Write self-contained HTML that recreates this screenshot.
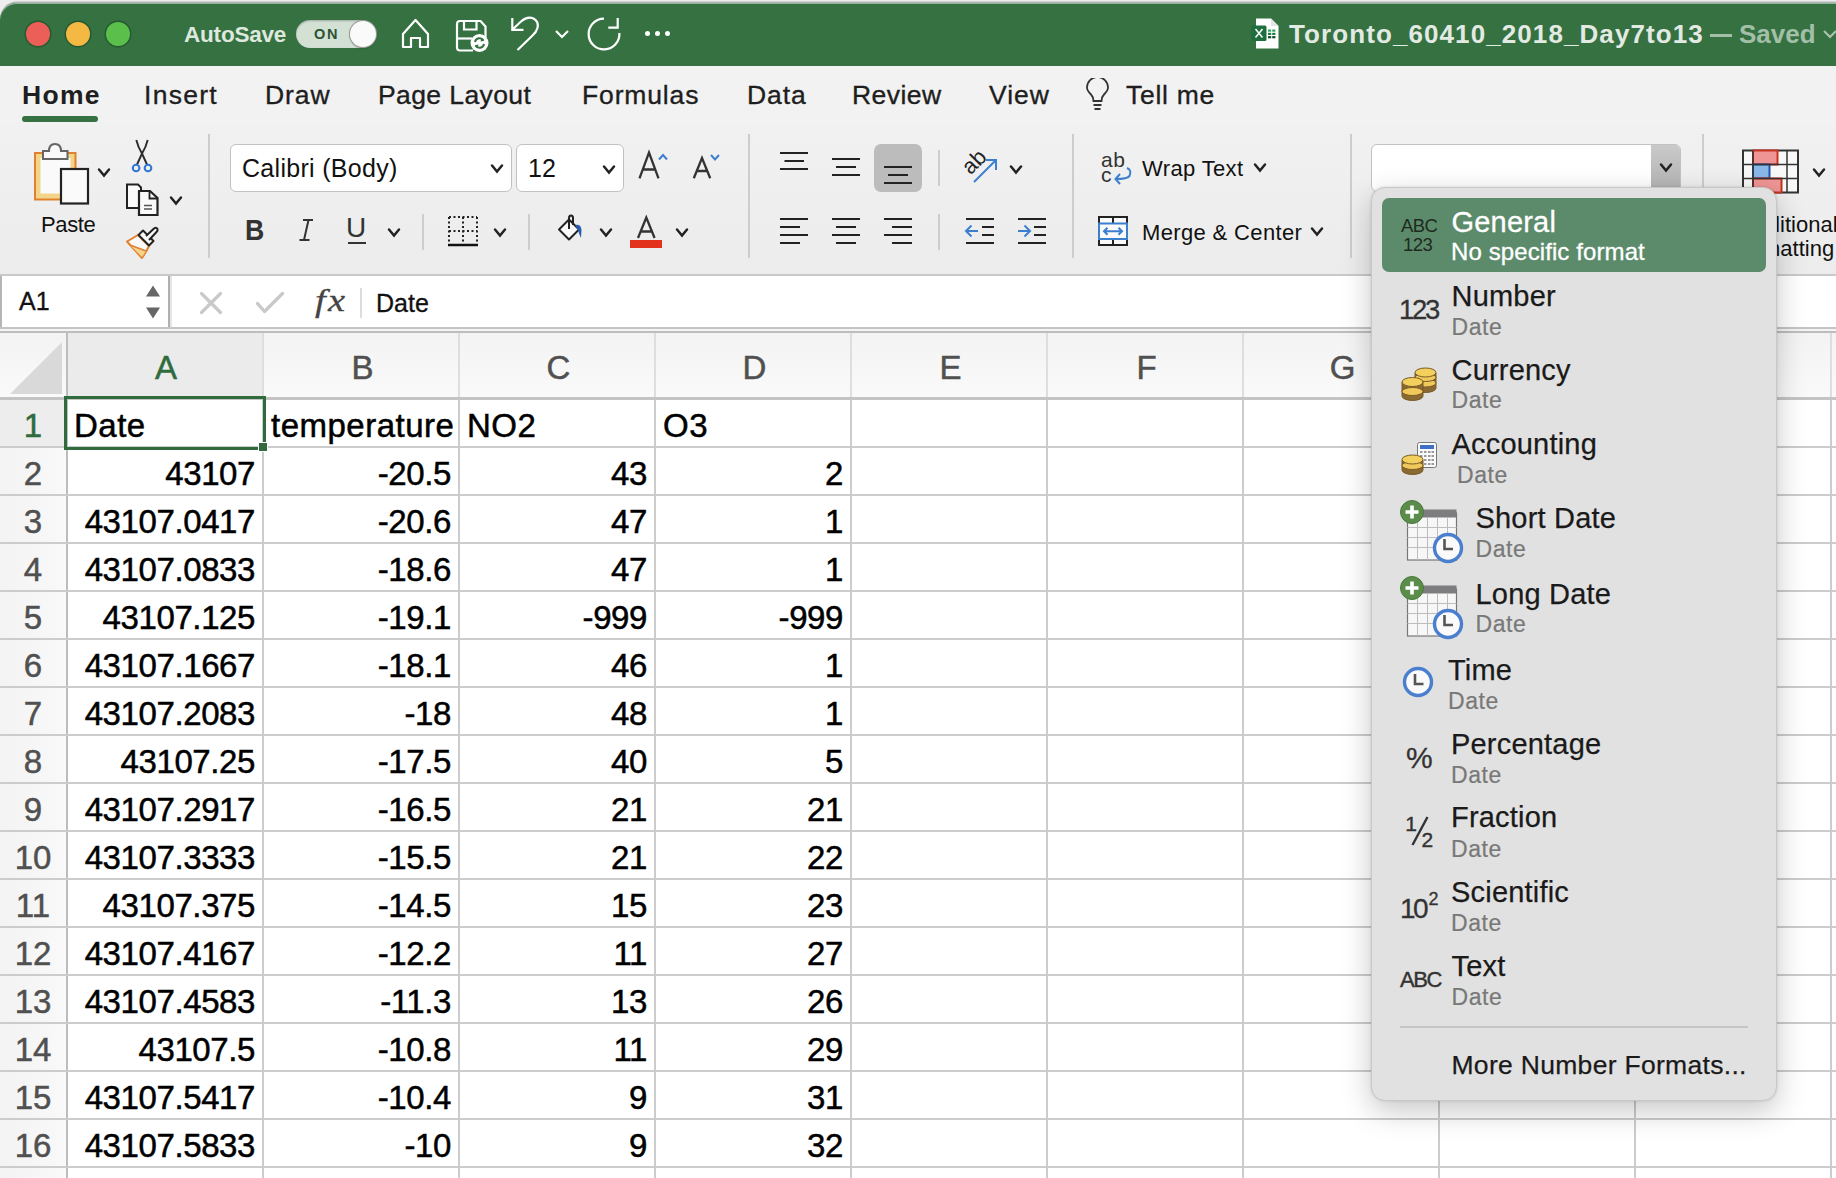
<!DOCTYPE html>
<html><head><meta charset="utf-8">
<style>
*{margin:0;padding:0;box-sizing:border-box}
html,body{width:1836px;height:1178px;overflow:hidden;background:#fff;font-family:"Liberation Sans",sans-serif;position:relative}
.a{position:absolute}
.colhdr{position:absolute;background:linear-gradient(#f3f3f3,#fafafa)}
.rowhdr{position:absolute;background:linear-gradient(90deg,#f3f3f3,#f9f9f9)}
.hl{position:absolute;text-align:center;font-size:33px;line-height:40px;-webkit-text-stroke:0.5px currentColor}
.rn{position:absolute;left:0;width:66px;text-align:center;font-size:33px;line-height:48px;height:48px;padding-top:2px;-webkit-text-stroke:0.5px currentColor}
.cl{position:absolute;font-size:33px;line-height:48px;color:#000;white-space:nowrap;padding-top:2px;letter-spacing:0.5px;-webkit-text-stroke:0.5px #000}
.cr{position:absolute;font-size:33px;line-height:48px;color:#000;text-align:right;white-space:nowrap;letter-spacing:-0.4px;padding-top:2px;-webkit-text-stroke:0.5px #000}
.tab{position:absolute;top:78.3px;font-size:26.5px;line-height:34px;color:#1e1e1e;white-space:nowrap;letter-spacing:0.35px;-webkit-text-stroke:0.35px #1e1e1e}
.b{font-weight:bold;letter-spacing:0.2px;-webkit-text-stroke:0}
.sep{position:absolute;width:2px;background:#cdcdcd}
.chev{position:absolute;width:16px;height:12px;overflow:visible}
.chev path{fill:none;stroke:#222;stroke-width:2.5;stroke-linecap:round}
.box{position:absolute;background:#fff;border:1px solid #c2c2c2;border-radius:6px}
.mt{position:absolute;font-size:29px;line-height:32px;color:#1a1a1a;white-space:nowrap;letter-spacing:0.2px;-webkit-text-stroke:0.25px #1a1a1a}
.ms{position:absolute;font-size:23px;line-height:26px;color:#787878;white-space:nowrap;letter-spacing:0.6px;-webkit-text-stroke:0.2px #787878}

</style></head><body>
<div class="colhdr" style="left:0;top:333px;width:1836px;height:66px"></div>
<div style="position:absolute;left:67px;top:333px;width:196px;height:66px;background:#ebebeb"></div>
<div class="rowhdr" style="left:0;top:400px;width:66px;height:778px"></div>
<div style="position:absolute;left:0;top:400px;width:66px;height:47px;background:#ededed"></div>
<svg style="position:absolute;left:0;top:333px" width="66" height="66"><polygon points="10,61 62,9 62,61" fill="#d9d9d9"/></svg>
<div style="position:absolute;left:66px;top:333px;width:2px;height:845px;background:#bdbdbd"></div>
<div style="position:absolute;left:262px;top:333px;width:2px;height:66px;background:#dedede"></div>
<div style="position:absolute;left:262px;top:399px;width:2px;height:779px;background:#cccccc"></div>
<div style="position:absolute;left:458px;top:333px;width:2px;height:66px;background:#dedede"></div>
<div style="position:absolute;left:458px;top:399px;width:2px;height:779px;background:#cccccc"></div>
<div style="position:absolute;left:654px;top:333px;width:2px;height:66px;background:#dedede"></div>
<div style="position:absolute;left:654px;top:399px;width:2px;height:779px;background:#cccccc"></div>
<div style="position:absolute;left:850px;top:333px;width:2px;height:66px;background:#dedede"></div>
<div style="position:absolute;left:850px;top:399px;width:2px;height:779px;background:#cccccc"></div>
<div style="position:absolute;left:1046px;top:333px;width:2px;height:66px;background:#dedede"></div>
<div style="position:absolute;left:1046px;top:399px;width:2px;height:779px;background:#cccccc"></div>
<div style="position:absolute;left:1242px;top:333px;width:2px;height:66px;background:#dedede"></div>
<div style="position:absolute;left:1242px;top:399px;width:2px;height:779px;background:#cccccc"></div>
<div style="position:absolute;left:1438px;top:333px;width:2px;height:66px;background:#dedede"></div>
<div style="position:absolute;left:1438px;top:399px;width:2px;height:779px;background:#cccccc"></div>
<div style="position:absolute;left:1634px;top:333px;width:2px;height:66px;background:#dedede"></div>
<div style="position:absolute;left:1634px;top:399px;width:2px;height:779px;background:#cccccc"></div>
<div style="position:absolute;left:1830px;top:333px;width:2px;height:66px;background:#dedede"></div>
<div style="position:absolute;left:1830px;top:399px;width:2px;height:779px;background:#cccccc"></div>
<div style="position:absolute;left:0;top:397px;width:1836px;height:2.5px;background:#c4c4c4"></div>
<div style="position:absolute;left:0;top:446px;width:1836px;height:2px;background:#cccccc"></div>
<div style="position:absolute;left:0;top:494px;width:1836px;height:2px;background:#cccccc"></div>
<div style="position:absolute;left:0;top:542px;width:1836px;height:2px;background:#cccccc"></div>
<div style="position:absolute;left:0;top:590px;width:1836px;height:2px;background:#cccccc"></div>
<div style="position:absolute;left:0;top:638px;width:1836px;height:2px;background:#cccccc"></div>
<div style="position:absolute;left:0;top:686px;width:1836px;height:2px;background:#cccccc"></div>
<div style="position:absolute;left:0;top:734px;width:1836px;height:2px;background:#cccccc"></div>
<div style="position:absolute;left:0;top:782px;width:1836px;height:2px;background:#cccccc"></div>
<div style="position:absolute;left:0;top:830px;width:1836px;height:2px;background:#cccccc"></div>
<div style="position:absolute;left:0;top:878px;width:1836px;height:2px;background:#cccccc"></div>
<div style="position:absolute;left:0;top:926px;width:1836px;height:2px;background:#cccccc"></div>
<div style="position:absolute;left:0;top:974px;width:1836px;height:2px;background:#cccccc"></div>
<div style="position:absolute;left:0;top:1022px;width:1836px;height:2px;background:#cccccc"></div>
<div style="position:absolute;left:0;top:1070px;width:1836px;height:2px;background:#cccccc"></div>
<div style="position:absolute;left:0;top:1118px;width:1836px;height:2px;background:#cccccc"></div>
<div style="position:absolute;left:0;top:1166px;width:1836px;height:2px;background:#cccccc"></div>
<div class="hl" style="left:67.5px;width:197px;top:348px;color:#2f6b3c">A</div>
<div class="hl" style="left:264.5px;width:196px;top:348px;color:#505050">B</div>
<div class="hl" style="left:460.5px;width:196px;top:348px;color:#505050">C</div>
<div class="hl" style="left:656.5px;width:196px;top:348px;color:#505050">D</div>
<div class="hl" style="left:852.5px;width:196px;top:348px;color:#505050">E</div>
<div class="hl" style="left:1048.5px;width:196px;top:348px;color:#505050">F</div>
<div class="hl" style="left:1244.5px;width:196px;top:348px;color:#505050">G</div>
<div class="hl" style="left:1440.5px;width:196px;top:348px;color:#505050">H</div>
<div class="hl" style="left:1636.5px;width:196px;top:348px;color:#505050">I</div>
<div class="rn" style="top:400px;color:#2f6b3c">1</div>
<div class="rn" style="top:448px;color:#505050">2</div>
<div class="rn" style="top:496px;color:#505050">3</div>
<div class="rn" style="top:544px;color:#505050">4</div>
<div class="rn" style="top:592px;color:#505050">5</div>
<div class="rn" style="top:640px;color:#505050">6</div>
<div class="rn" style="top:688px;color:#505050">7</div>
<div class="rn" style="top:736px;color:#505050">8</div>
<div class="rn" style="top:784px;color:#505050">9</div>
<div class="rn" style="top:832px;color:#505050">10</div>
<div class="rn" style="top:880px;color:#505050">11</div>
<div class="rn" style="top:928px;color:#505050">12</div>
<div class="rn" style="top:976px;color:#505050">13</div>
<div class="rn" style="top:1024px;color:#505050">14</div>
<div class="rn" style="top:1072px;color:#505050">15</div>
<div class="rn" style="top:1120px;color:#505050">16</div>
<div class="cl" style="left:74px;top:400px">Date</div>
<div class="cl" style="left:271px;top:400px">temperature</div>
<div class="cl" style="left:467px;top:400px">NO2</div>
<div class="cl" style="left:663px;top:400px">O3</div>
<div class="cr" style="left:66px;width:189px;top:448px">43107</div>
<div class="cr" style="left:263px;width:188px;top:448px">-20.5</div>
<div class="cr" style="left:459px;width:188px;top:448px">43</div>
<div class="cr" style="left:655px;width:188px;top:448px">2</div>
<div class="cr" style="left:66px;width:189px;top:496px">43107.0417</div>
<div class="cr" style="left:263px;width:188px;top:496px">-20.6</div>
<div class="cr" style="left:459px;width:188px;top:496px">47</div>
<div class="cr" style="left:655px;width:188px;top:496px">1</div>
<div class="cr" style="left:66px;width:189px;top:544px">43107.0833</div>
<div class="cr" style="left:263px;width:188px;top:544px">-18.6</div>
<div class="cr" style="left:459px;width:188px;top:544px">47</div>
<div class="cr" style="left:655px;width:188px;top:544px">1</div>
<div class="cr" style="left:66px;width:189px;top:592px">43107.125</div>
<div class="cr" style="left:263px;width:188px;top:592px">-19.1</div>
<div class="cr" style="left:459px;width:188px;top:592px">-999</div>
<div class="cr" style="left:655px;width:188px;top:592px">-999</div>
<div class="cr" style="left:66px;width:189px;top:640px">43107.1667</div>
<div class="cr" style="left:263px;width:188px;top:640px">-18.1</div>
<div class="cr" style="left:459px;width:188px;top:640px">46</div>
<div class="cr" style="left:655px;width:188px;top:640px">1</div>
<div class="cr" style="left:66px;width:189px;top:688px">43107.2083</div>
<div class="cr" style="left:263px;width:188px;top:688px">-18</div>
<div class="cr" style="left:459px;width:188px;top:688px">48</div>
<div class="cr" style="left:655px;width:188px;top:688px">1</div>
<div class="cr" style="left:66px;width:189px;top:736px">43107.25</div>
<div class="cr" style="left:263px;width:188px;top:736px">-17.5</div>
<div class="cr" style="left:459px;width:188px;top:736px">40</div>
<div class="cr" style="left:655px;width:188px;top:736px">5</div>
<div class="cr" style="left:66px;width:189px;top:784px">43107.2917</div>
<div class="cr" style="left:263px;width:188px;top:784px">-16.5</div>
<div class="cr" style="left:459px;width:188px;top:784px">21</div>
<div class="cr" style="left:655px;width:188px;top:784px">21</div>
<div class="cr" style="left:66px;width:189px;top:832px">43107.3333</div>
<div class="cr" style="left:263px;width:188px;top:832px">-15.5</div>
<div class="cr" style="left:459px;width:188px;top:832px">21</div>
<div class="cr" style="left:655px;width:188px;top:832px">22</div>
<div class="cr" style="left:66px;width:189px;top:880px">43107.375</div>
<div class="cr" style="left:263px;width:188px;top:880px">-14.5</div>
<div class="cr" style="left:459px;width:188px;top:880px">15</div>
<div class="cr" style="left:655px;width:188px;top:880px">23</div>
<div class="cr" style="left:66px;width:189px;top:928px">43107.4167</div>
<div class="cr" style="left:263px;width:188px;top:928px">-12.2</div>
<div class="cr" style="left:459px;width:188px;top:928px">11</div>
<div class="cr" style="left:655px;width:188px;top:928px">27</div>
<div class="cr" style="left:66px;width:189px;top:976px">43107.4583</div>
<div class="cr" style="left:263px;width:188px;top:976px">-11.3</div>
<div class="cr" style="left:459px;width:188px;top:976px">13</div>
<div class="cr" style="left:655px;width:188px;top:976px">26</div>
<div class="cr" style="left:66px;width:189px;top:1024px">43107.5</div>
<div class="cr" style="left:263px;width:188px;top:1024px">-10.8</div>
<div class="cr" style="left:459px;width:188px;top:1024px">11</div>
<div class="cr" style="left:655px;width:188px;top:1024px">29</div>
<div class="cr" style="left:66px;width:189px;top:1072px">43107.5417</div>
<div class="cr" style="left:263px;width:188px;top:1072px">-10.4</div>
<div class="cr" style="left:459px;width:188px;top:1072px">9</div>
<div class="cr" style="left:655px;width:188px;top:1072px">31</div>
<div class="cr" style="left:66px;width:189px;top:1120px">43107.5833</div>
<div class="cr" style="left:263px;width:188px;top:1120px">-10</div>
<div class="cr" style="left:459px;width:188px;top:1120px">9</div>
<div class="cr" style="left:655px;width:188px;top:1120px">32</div>
<div style="position:absolute;left:64px;top:396px;width:196px;height:48px;border:3.5px solid #2f6b3c;box-sizing:content-box;border-right-width:3.5px"></div>
<div style="position:absolute;left:258px;top:442px;width:10px;height:10px;background:#2f6b3c;border:1px solid #fff"></div>
<div class="a" style="left:0;top:0;width:1836px;height:40px;background:#ededed"></div>
<div class="a" style="left:0;top:3px;width:1836px;height:63px;background:#357141;border-top-left-radius:17px;box-shadow:0 -1.5px 0.5px #b5b5b5,inset 0 1px 0 #8fb598"></div>
<!-- traffic lights -->
<div class="a" style="left:26px;top:22px;width:24px;height:24px;border-radius:50%;background:#ec5f58;box-shadow:0 0 0 1.5px #265a31"></div>
<div class="a" style="left:66px;top:22px;width:24px;height:24px;border-radius:50%;background:#f4b943;box-shadow:0 0 0 1.5px #265a31"></div>
<div class="a" style="left:106px;top:22px;width:24px;height:24px;border-radius:50%;background:#5ac04b;box-shadow:0 0 0 1.5px #265a31"></div>
<div class="a" style="left:184px;top:19.5px;font-size:22.5px;line-height:30px;font-weight:bold;color:#dfe8df;letter-spacing:-0.2px">AutoSave</div>
<div class="a" style="left:296px;top:20px;width:79px;height:28px;border-radius:14px;background:#d3e0d4;box-shadow:inset 0 1px 2px rgba(0,0,0,.25)"></div>
<div class="a" style="left:314px;top:20px;font-size:14.5px;line-height:28px;font-weight:bold;color:#2c5234;letter-spacing:1.8px">ON</div>
<div class="a" style="left:350px;top:21px;width:26px;height:26px;border-radius:50%;background:#fafafa;box-shadow:0 0 0 1px #9a9a9a,0 1px 2px rgba(0,0,0,.4)"></div>
<svg class="a" style="left:396px;top:14px" width="40" height="40" viewBox="0 0 40 40"><path d="M7 20 L19.5 6 L32 20 L32 33 L24 33 L24 24 L15 24 L15 33 L7 33 Z" fill="none" stroke="#fff" stroke-width="2.2" stroke-linejoin="round"/></svg>
<svg class="a" style="left:452px;top:16px" width="40" height="40" viewBox="0 0 40 40"><path d="M21 34.5 L8 34.5 Q5 34.5 5 31.5 L5 8 Q5 5 8 5 L28.5 5 L33.5 10.5 L33.5 22" fill="none" stroke="#fff" stroke-width="2.2" stroke-linejoin="round"/><path d="M12 5 L12 13.5 L24.5 13.5 L24.5 5" fill="none" stroke="#fff" stroke-width="2.2"/><path d="M5 22.5 L20 22.5" fill="none" stroke="#fff" stroke-width="2.2"/><circle cx="27.5" cy="27" r="9" fill="#fff"/><path d="M23 26 A4.6 4.6 0 0 1 31.5 24.5 M32 28 A4.6 4.6 0 0 1 23.5 29.5" fill="none" stroke="#357141" stroke-width="2"/><path d="M29.5 22 L32.3 24.8 L28.5 25.5Z M25.5 32 L22.7 29.2 L26.5 28.5Z" fill="#357141"/></svg>
<svg class="a" style="left:508px;top:14px" width="36" height="40" viewBox="0 0 36 40"><path d="M4.3 4 L4.3 15.8 L15.5 15.8" fill="none" stroke="#fff" stroke-width="2.2"/><path d="M4.8 15.3 L13 7.5 Q19.5 1.8 25.5 4.5 Q31 7.5 29.5 14 Q28.5 18 24 22 L9.5 36" fill="none" stroke="#fff" stroke-width="2.2" stroke-linejoin="round"/></svg>
<svg class="a" style="left:552px;top:26px" width="20" height="16" viewBox="0 0 20 16"><path d="M4 5 L10 11 L16 5" fill="none" stroke="#fff" stroke-width="2.2"/></svg>
<svg class="a" style="left:584px;top:14px" width="40" height="40" viewBox="0 0 40 40"><path d="M20 4.6 A15.4 15.4 0 1 0 35.4 19" fill="none" stroke="#fff" stroke-width="2.2"/><path d="M33.7 4 L33.7 13.6 L24.3 13.6" fill="none" stroke="#fff" stroke-width="2.2"/></svg>
<div class="a" style="left:645px;top:31px;width:5px;height:5px;border-radius:50%;background:#fff"></div>
<div class="a" style="left:655px;top:31px;width:5px;height:5px;border-radius:50%;background:#fff"></div>
<div class="a" style="left:665px;top:31px;width:5px;height:5px;border-radius:50%;background:#fff"></div>
<!-- file icon -->
<svg class="a" style="left:1250px;top:17px" width="32" height="34" viewBox="0 0 32 34"><path d="M6 1.5 L21 1.5 L28.5 9 L28.5 31.5 L6 31.5 Z" fill="#fff"/><path d="M21 1.5 L21 9 L28.5 9 Z" fill="#e4e4e4"/><rect x="1.5" y="8.5" width="15" height="15.5" rx="1.5" fill="#1f6e3d"/><path d="M5.5 12 L12.5 20.5 M12.5 12 L5.5 20.5" stroke="#fff" stroke-width="1.5"/><g><rect x="18" y="12.5" width="3.2" height="2.2" fill="#33a363"/><rect x="22.2" y="12.5" width="3.2" height="2.2" fill="#33a363"/><rect x="18" y="15.8" width="3.2" height="2.2" fill="#1f7a45"/><rect x="22.2" y="15.8" width="3.2" height="2.2" fill="#1f7a45"/><rect x="18" y="19.1" width="3.2" height="2.2" fill="#0e4a2a"/><rect x="22.2" y="19.1" width="3.2" height="2.2" fill="#0e4a2a"/></g></svg>
<div class="a" style="left:1289px;top:17px;font-size:26px;line-height:34px;font-weight:bold;color:#e3eae3;white-space:nowrap;letter-spacing:1.09px">Toronto_60410_2018_Day7to13</div>
<div class="a" style="left:1710px;top:34px;width:22px;height:3px;background:#a3bfa8"></div>
<div class="a" style="left:1739px;top:17px;font-size:26px;line-height:34px;font-weight:bold;color:#a3bfa8;white-space:nowrap">Saved</div>
<svg class="a" style="left:1821px;top:26px" width="18" height="16" viewBox="0 0 18 16"><path d="M3 5 L9 11 L15 5" fill="none" stroke="#a9c2ad" stroke-width="2.2"/></svg>
<!-- tabs -->
<div class="a" style="left:0;top:66px;width:1836px;height:60px;background:#f2f2f2"></div>
<div class="tab b" style="left:22px;letter-spacing:1.3px">Home</div>
<div class="a" style="left:22px;top:116px;width:76px;height:6px;border-radius:3px;background:#357141"></div>
<div class="tab" style="left:144px;letter-spacing:1.27px">Insert</div>
<div class="tab" style="left:265px;letter-spacing:0.9px">Draw</div>
<div class="tab" style="left:378px;letter-spacing:0.4px">Page Layout</div>
<div class="tab" style="left:582px;letter-spacing:0.85px">Formulas</div>
<div class="tab" style="left:747px;letter-spacing:0.9px">Data</div>
<div class="tab" style="left:852px;letter-spacing:0.45px">Review</div>
<div class="tab" style="left:989px;letter-spacing:0.95px">View</div>
<svg class="a" style="left:1082px;top:78px" width="32" height="34" viewBox="0 0 32 34"><path d="M11.5 23 Q11.5 19 9 16.5 Q5 12.5 5 9.5 A10.5 10.5 0 0 1 26 9.5 Q26 12.5 22 16.5 Q19.5 19 19.5 23 Z" fill="none" stroke="#333" stroke-width="1.8"/><path d="M11.5 27 L19.5 27 M12.5 31 L18.5 31" stroke="#333" stroke-width="1.8"/></svg>
<div class="tab" style="left:1126px;letter-spacing:0.7px">Tell me</div>

<div class="a" style="left:0;top:126px;width:1836px;height:149px;background:linear-gradient(#f1f1f1,#ececec)"></div>
<div class="a" style="left:0;top:274px;width:1836px;height:2px;background:#c9c9c9"></div>
<!-- separators -->
<div class="sep" style="left:208px;top:134px;height:124px"></div>
<div class="sep" style="left:748px;top:134px;height:124px"></div>
<div class="sep" style="left:1072px;top:134px;height:124px"></div>
<div class="sep" style="left:1350px;top:134px;height:124px"></div>
<div class="sep" style="left:1702px;top:134px;height:124px"></div>
<div class="sep" style="left:422px;top:214px;height:36px"></div>
<div class="sep" style="left:528px;top:214px;height:36px"></div>
<div class="sep" style="left:938px;top:150px;height:36px"></div>
<div class="sep" style="left:938px;top:214px;height:36px"></div>
<!-- paste -->
<svg class="a" style="left:30px;top:140px" width="64" height="68" viewBox="0 0 64 68">
<rect x="5" y="13" width="40.5" height="46.5" fill="#f3d58a" stroke="#e0812f" stroke-width="2"/>
<rect x="10.5" y="18" width="30" height="35.5" fill="#fafafa"/>
<path d="M13 19 L13 11 L19 11 Q19 4 25 4 Q31 4 31 11 L37.5 11 L37.5 19 Z" fill="#fafafa" stroke="#666" stroke-width="2"/>
<rect x="31" y="29" width="27" height="34.5" fill="#fafafa" stroke="#222" stroke-width="2.2"/>
</svg>
<svg class="chev" style="left:96px;top:166px"><path d="M3 3.5 L8 9.5 L13 3.5"/></svg>
<div class="a" style="left:41px;top:211.8px;font-size:22px;line-height:26px;color:#111;letter-spacing:-0.35px">Paste</div>
<!-- scissors -->
<svg class="a" style="left:126px;top:138px" width="32" height="36" viewBox="0 0 32 36">
<path d="M10.3 2 Q12 9 16.2 16 L21 26.5 M21.7 2 Q20 9 15.8 16 L11 26.5" stroke="#2a2a2a" stroke-width="1.9" fill="none"/>
<circle cx="10.1" cy="30" r="3.3" fill="none" stroke="#3277d0" stroke-width="2.1"/>
<circle cx="22" cy="30" r="3.3" fill="none" stroke="#3277d0" stroke-width="2.1"/>
</svg>
<!-- copy -->
<svg class="a" style="left:122px;top:180px" width="40" height="40" viewBox="0 0 40 40">
<path d="M5 28 L5 4.5 L16 4.5 L19 7.5 L19 28 Z" fill="#fafafa" stroke="#222" stroke-width="2"/>
<path d="M17 35 L17 11 L28 11 L35.5 18 L35.5 35 Z" fill="#fafafa" stroke="#222" stroke-width="2.2"/>
<path d="M27.5 11 L27.5 18.5 L35.5 18.5" fill="none" stroke="#222" stroke-width="1.8"/>
<path d="M22 25.5 L30 25.5 M22 29 L30 29" stroke="#555" stroke-width="1.6"/>
</svg>
<svg class="chev" style="left:168px;top:194px"><path d="M3 3.5 L8 9.5 L13 3.5"/></svg>
<!-- format painter -->
<svg class="a" style="left:122px;top:224px" width="40" height="38" viewBox="0 0 40 38">
<path d="M5 17.5 Q11 14 16 11 L27 22 Q24 28 20 34 Z" fill="#fafafa" stroke="#e0812f" stroke-width="2" stroke-linejoin="round"/>
<path d="M8 21 L24 27 L20 33 Z" fill="#f3d58a"/>
<path d="M8 21 L24 27" stroke="#e0812f" stroke-width="1.8"/>
<path d="M16.5 11 L21 6.5 L31.5 17 L27 21.5 Z" fill="#fafafa" stroke="#222" stroke-width="2" stroke-linejoin="round"/>
<path d="M24 12 L32 4.5 Q34.5 3 35.5 5 Q36 6.5 34.5 8 L27 16" fill="#fafafa" stroke="#222" stroke-width="2" stroke-linejoin="round"/>
</svg>
<!-- font box -->
<div class="box" style="left:230px;top:144px;width:282px;height:48px"></div>
<div class="a" style="left:242px;top:153px;font-size:25px;line-height:30px;color:#111;letter-spacing:0.3px">Calibri (Body)</div>
<svg class="chev" style="left:489px;top:162px"><path d="M3 3.5 L8 9.5 L13 3.5"/></svg>
<div class="box" style="left:516px;top:144px;width:108px;height:48px"></div>
<div class="a" style="left:528px;top:153px;font-size:25px;line-height:30px;color:#111">12</div>
<svg class="chev" style="left:601px;top:163px"><path d="M3 3.5 L8 9.5 L13 3.5"/></svg>
<svg class="a" style="left:630px;top:146px" width="100" height="40" viewBox="0 0 100 40">
<g fill="none" stroke="#333" stroke-width="2.3" stroke-linejoin="miter">
<path d="M9.5 32.3 L19 6.5 L28.5 32.3 M13 23.5 H25"/>
<path d="M63.8 32.3 L72 12 L80.2 32.3 M66.8 25 H77.2"/>
</g>
<path d="M29 13.5 L33 9 L37 13.5" fill="none" stroke="#3d7fcf" stroke-width="2"/>
<path d="M81 9 L85 13.5 L89 9" fill="none" stroke="#3d7fcf" stroke-width="2"/>
</svg>
<!-- B I U -->
<div class="a" style="left:245px;top:214px;font-size:29px;line-height:32px;color:#333;font-weight:bold;transform:scaleX(0.92);transform-origin:0 0">B</div>
<svg class="a" style="left:296px;top:216px" width="20" height="28" viewBox="0 0 20 28"><path d="M7 4 H17 M3.5 24 H13.5 M12.5 4 L8 24" fill="none" stroke="#333" stroke-width="2"/></svg>
<div class="a" style="left:346px;top:212px;font-size:28px;line-height:32px;color:#333">U</div>
<div class="a" style="left:348px;top:242px;width:18px;height:2px;background:#333"></div>
<svg class="chev" style="left:386px;top:226px"><path d="M3 3.5 L8 9.5 L13 3.5"/></svg>
<!-- borders -->
<svg class="a" style="left:446px;top:214px" width="34" height="34" viewBox="0 0 34 34">
<path d="M3 3 L31 3 M3 3 L3 30 M31 3 L31 30 M17 3 L17 30 M3 17 L31 17" stroke="#222" stroke-width="2" stroke-dasharray="2 2.5" fill="none"/>
<path d="M2 31 L32 31" stroke="#111" stroke-width="2.5"/>
</svg>
<svg class="chev" style="left:492px;top:226px"><path d="M3 3.5 L8 9.5 L13 3.5"/></svg>
<!-- fill -->
<svg class="a" style="left:556px;top:214px" width="32" height="30" viewBox="0 0 32 30">
<path d="M3 15.5 L13 5.5 L23 15.5 L13 25.5 Z" fill="#fafafa" stroke="#222" stroke-width="2" stroke-linejoin="round"/>
<path d="M13 15 L13 4 Q13 1.5 15 1.5 Q17 1.5 17 4 L17 11" fill="none" stroke="#222" stroke-width="2"/>
<path d="M19 11 Q25 9.5 25.5 16 L25 24 Q23 20 22 16 Z" fill="#2a5db0"/>
</svg>
<svg class="chev" style="left:598px;top:226px"><path d="M3 3.5 L8 9.5 L13 3.5"/></svg>
<svg class="a" style="left:630px;top:210px" width="34" height="30" viewBox="0 0 34 30"><path d="M8 28 L16.3 7.5 L24.6 28 M11 21.5 H21.6" fill="none" stroke="#333" stroke-width="2.3"/></svg>
<div class="a" style="left:630px;top:240px;width:32px;height:8px;background:#e2321c"></div>
<svg class="chev" style="left:674px;top:226px"><path d="M3 3.5 L8 9.5 L13 3.5"/></svg>
<!-- alignment -->
<svg class="a" style="left:776px;top:144px" width="150" height="110" viewBox="0 0 150 110">
<rect x="98" y="0" width="48" height="48" rx="7" fill="#bcbcbc"/>
<g stroke="#222" stroke-width="2" fill="none">
<path d="M4 9 H32 M8.5 17 H28 M4 25 H32"/>
<path d="M56 15 H84 M60 23 H80 M56 31 H84"/>
<path d="M108 23 H136 M112 31 H132 M108 39 H136"/>
<path d="M4 75 H32 M4 83 H24 M4 91 H32 M4 99 H24"/>
<path d="M56 75 H84 M60 83 H80 M56 91 H84 M60 99 H80"/>
<path d="M108 75 H136 M116 83 H136 M108 91 H136 M116 99 H136"/>
</g>
</svg>
<!-- orientation -->
<div class="a" style="left:962px;top:150px;font-size:22px;line-height:24px;color:#222;transform:rotate(-45deg);transform-origin:50% 50%">ab</div>
<svg class="a" style="left:970px;top:155px" width="32" height="32" viewBox="0 0 32 32"><path d="M4 27 L25.5 5.5 M16 5 L26 5 L26 15" fill="none" stroke="#3d7fcf" stroke-width="2"/></svg>
<svg class="chev" style="left:1008px;top:163px"><path d="M3 3.5 L8 9.5 L13 3.5"/></svg>
<!-- indent -->
<svg class="a" style="left:962px;top:212px" width="90" height="40" viewBox="0 0 90 40">
<g stroke="#222" stroke-width="2" fill="none">
<path d="M4 7 H32 M20 15 H32 M20 23 H32 M4 31 H32"/>
<path d="M56 7 H84 M72 15 H84 M72 23 H84 M56 31 H84"/>
</g>
<g stroke="#3d7fcf" stroke-width="2" fill="none">
<path d="M4 19 H16 M9.5 13.5 L4 19 L9.5 24.5"/>
<path d="M56 19 H68 M62.5 13.5 L68 19 L62.5 24.5"/>
</g>
</svg>
<!-- wrap text -->
<div class="a" style="left:1101px;top:148px;font-size:21px;line-height:24px;color:#333;letter-spacing:0.5px">ab</div>
<div class="a" style="left:1101px;top:163px;font-size:21px;line-height:24px;color:#333">c</div>
<svg class="a" style="left:1110px;top:166px" width="24" height="22" viewBox="0 0 24 22"><path d="M17 2 Q22 4 19.5 10 Q17 13 6 13 M10 8 L5.5 13 L10 18" fill="none" stroke="#3d7fcf" stroke-width="2"/></svg>
<div class="a" style="left:1142px;top:155px;font-size:22px;line-height:28px;color:#111;letter-spacing:0.35px">Wrap Text</div>
<svg class="chev" style="left:1252px;top:161px"><path d="M3 3.5 L8 9.5 L13 3.5"/></svg>
<svg class="a" style="left:1096px;top:214px" width="36" height="34" viewBox="0 0 36 34">
<rect x="3" y="3" width="28" height="28" fill="#fafafa" stroke="#222" stroke-width="2"/>
<path d="M17 3 V31" stroke="#222" stroke-width="2"/>
<rect x="3" y="9.5" width="28" height="15.5" fill="#fafafa" stroke="#3d7fcf" stroke-width="2"/>
<path d="M8 17.3 H26 M11.5 13.8 L8 17.3 L11.5 20.8 M22.5 13.8 L26 17.3 L22.5 20.8" fill="none" stroke="#3d7fcf" stroke-width="2"/>
</svg>
<div class="a" style="left:1142px;top:219px;font-size:22px;line-height:28px;color:#111;letter-spacing:0.35px">Merge &amp; Center</div>
<svg class="chev" style="left:1309px;top:225px"><path d="M3 3.5 L8 9.5 L13 3.5"/></svg>
<!-- number format box -->
<div class="box" style="left:1371px;top:144px;width:310px;height:48px"></div>
<div class="a" style="left:1651px;top:145px;width:29px;height:46px;background:linear-gradient(#c9c9c9,#b3b3b3);border-radius:0 5px 5px 0"></div>
<svg class="chev" style="left:1658px;top:161px"><path d="M3 3.5 L8 9.5 L13 3.5"/></svg>
<!-- conditional formatting -->
<svg class="a" style="left:1740px;top:148px" width="60" height="48" viewBox="0 0 60 48">
<rect x="3" y="2.5" width="55" height="42" fill="#f8f8f8" stroke="#333" stroke-width="2"/>
<rect x="13" y="2.5" width="24.5" height="14" fill="#ef9595" stroke="#c8321e" stroke-width="2"/>
<rect x="13" y="16.5" width="16.5" height="14" fill="#8ab8e8" stroke="#2356a8" stroke-width="2"/>
<rect x="13" y="30.5" width="28.5" height="14" fill="#ef9595" stroke="#c8321e" stroke-width="2"/>
<path d="M3 16.5 H58 M3 30.5 H58 M13 2.5 V44.5 M47 2.5 V44.5" stroke="#333" stroke-width="1.5" fill="none"/>
</svg>
<svg class="chev" style="left:1811px;top:166px"><path d="M3 3.5 L8 9.5 L13 3.5"/></svg>
<div class="a" style="left:1727.5px;top:213px;font-size:22px;line-height:24px;color:#111;white-space:nowrap">Conditional</div>
<div class="a" style="left:1729px;top:237px;font-size:22px;line-height:24px;color:#111;white-space:nowrap">Formatting</div>

<div class="a" style="left:0;top:276px;width:1836px;height:52px;background:#fff"></div>
<div class="a" style="left:0;top:276px;width:2px;height:52px;background:#b5b5b5"></div>
<div class="a" style="left:168px;top:276px;width:2px;height:52px;background:#b0b0b0"></div>
<div class="a" style="left:170px;top:276px;width:2px;height:52px;background:#e6e6e6"></div>
<div class="a" style="left:0;top:327px;width:1836px;height:2px;background:#c4c4c4"></div>
<div class="a" style="left:0;top:329px;width:1836px;height:2px;background:#f4f4f4"></div>
<div class="a" style="left:0;top:331px;width:1836px;height:2px;background:#bdbdbd"></div>
<div class="a" style="left:19px;top:286px;font-size:25px;line-height:30px;color:#111;-webkit-text-stroke:0.3px #111">A1</div>
<svg class="a" style="left:144px;top:283px" width="18" height="38" viewBox="0 0 18 38"><path d="M2 13.5 L9 2.5 L16 13.5 Z M2 24.5 L9 35.5 L16 24.5 Z" fill="#666"/></svg>
<svg class="a" style="left:196px;top:288px" width="30" height="30" viewBox="0 0 30 30"><path d="M5.5 5.5 L24.5 24.5 M24.5 5.5 L5.5 24.5" stroke="#c9c9c9" stroke-width="3.2" stroke-linecap="round"/></svg>
<svg class="a" style="left:252px;top:288px" width="36" height="30" viewBox="0 0 36 30"><path d="M5.5 15.5 L12.5 23.5 L30.5 5.5" fill="none" stroke="#c9c9c9" stroke-width="3.4" stroke-linecap="round" stroke-linejoin="round"/></svg>
<div class="a" style="left:315px;top:282px;font-size:32px;line-height:36px;color:#444;font-style:italic;font-family:'Liberation Serif',serif;letter-spacing:2px;transform:scaleX(1.2);transform-origin:0 0;-webkit-text-stroke:0.3px #444">fx</div>
<div class="a" style="left:360px;top:288px;width:2px;height:30px;background:#dcdcdc"></div>
<div class="a" style="left:376px;top:288px;font-size:25px;line-height:30px;color:#111;-webkit-text-stroke:0.3px #111">Date</div>

<div class="a" style="left:1371px;top:187px;width:406px;height:914px;background:#e1e1e1;border:1px solid #c8c8c8;border-radius:14px;box-shadow:0 10px 30px rgba(0,0,0,.22),0 0 3px rgba(0,0,0,.12)"></div>
<div class="a" style="left:1382px;top:198px;width:384px;height:74px;background:#5c8b6b;border-radius:7px"></div>
<div class="mt" style="left:1451.5px;top:206.0px;color:#fff;-webkit-text-stroke:0.3px #fff">General</div>
<div class="ms" style="left:1451px;top:237.7px;color:#fff;font-size:24px;line-height:28px;letter-spacing:0.1px;-webkit-text-stroke:0.3px #fff">No specific format</div>
<div class="a" style="left:1401px;top:216.2px;font-size:18.5px;line-height:20px;color:#1e2a20;letter-spacing:-0.6px">ABC</div>
<div class="a" style="left:1403px;top:234.9px;font-size:18.5px;line-height:20px;color:#1e2a20;letter-spacing:-0.6px">123</div>
<div class="mt" style="left:1451.5px;top:280.1px">Number</div>
<div class="ms" style="left:1451.5px;top:313.7px">Date</div>
<div class="a" style="left:1399px;top:294.5px;font-size:27.5px;line-height:30px;color:#333;letter-spacing:-2.3px;-webkit-text-stroke:0.3px #333">123</div>
<div class="mt" style="left:1451.5px;top:353.7px">Currency</div>
<div class="ms" style="left:1451.5px;top:387.0px">Date</div>
<svg class="a" style="left:1398px;top:364px" width="44" height="40" viewBox="0 0 44 40">
<g stroke="#7a5a25" stroke-width="1"><path d="M17 9 v15 a10.5 4.5 0 0 0 21 0 v-15" fill="#8a6a30"/>
<ellipse cx="27.5" cy="19" rx="10.5" ry="4" fill="#f0c95a"/><ellipse cx="27.5" cy="13.5" rx="10.5" ry="4" fill="#f0c95a"/><ellipse cx="27.5" cy="8.5" rx="10.5" ry="4.5" fill="#f3cf5e"/>
<path d="M4 18 v14 a10.5 4.5 0 0 0 21 0 v-14" fill="#8a6a30"/>
<ellipse cx="14.5" cy="27.5" rx="10.5" ry="4" fill="#f0c95a"/><ellipse cx="14.5" cy="18" rx="10.5" ry="4.5" fill="#f3cf5e"/></g></svg>
<div class="mt" style="left:1451.5px;top:427.7px">Accounting</div>
<div class="ms" style="left:1457.0px;top:461.8px">Date</div>
<svg class="a" style="left:1398px;top:438px" width="44" height="40" viewBox="0 0 44 40">
<rect x="19.5" y="4.5" width="19" height="25" rx="2" fill="#fafafa" stroke="#777" stroke-width="1"/>
<rect x="22" y="7" width="14" height="4" fill="#3d6fc4"/>
<g fill="#9a9a9a"><rect x="22" y="13" width="2.5" height="2"/><rect x="26" y="13" width="2.5" height="2"/><rect x="30" y="13" width="2.5" height="2"/><rect x="33.5" y="13" width="2.5" height="2"/>
<rect x="22" y="17" width="2.5" height="2"/><rect x="26" y="17" width="2.5" height="2"/><rect x="30" y="17" width="2.5" height="2"/><rect x="33.5" y="17" width="2.5" height="2"/>
<rect x="22" y="21" width="2.5" height="2"/><rect x="26" y="21" width="2.5" height="2"/><rect x="30" y="21" width="2.5" height="2"/><rect x="33.5" y="21" width="2.5" height="2"/>
<rect x="22" y="25" width="2.5" height="2"/><rect x="26" y="25" width="2.5" height="2"/><rect x="30" y="25" width="2.5" height="2"/><rect x="33.5" y="25" width="2.5" height="2"/></g>
<g stroke="#7a5a25" stroke-width="1"><path d="M4 22 v10 a10.5 4.5 0 0 0 21 0 v-10" fill="#8a6a30"/>
<ellipse cx="14.5" cy="27.5" rx="10.5" ry="4" fill="#f0c95a"/><ellipse cx="14.5" cy="21.5" rx="10.5" ry="4.5" fill="#f3cf5e"/></g></svg>
<div class="mt" style="left:1475.5px;top:502.0px">Short Date</div>
<div class="ms" style="left:1475.5px;top:535.5px">Date</div>
<svg class="a" style="left:1396px;top:496px" width="72" height="72" viewBox="0 0 72 72">
<rect x="11.5" y="17" width="49" height="47" fill="#f7f7f7" stroke="#777" stroke-width="1.2"/>
<rect x="11.5" y="13.5" width="49" height="8" fill="#7d7d80"/>
<g stroke="#bdbdbd" stroke-width="1"><path d="M21.5 21.5 V64 M31.5 21.5 V64 M41.5 21.5 V64 M51.5 21.5 V64 M11.5 31.5 H60.5 M11.5 41.5 H60.5 M11.5 51.5 H60.5"/></g>
<circle cx="16" cy="16" r="11.5" fill="#5b8c4a" stroke="#4a7a3b" stroke-width="1"/>
<path d="M16 9.5 V22.5 M9.5 16 H22.5" stroke="#fff" stroke-width="3.6"/>
<circle cx="52" cy="52" r="13.5" fill="#fafafa" stroke="#4a7fcf" stroke-width="3.4"/>
<path d="M48.5 43 V53 H57" fill="none" stroke="#555" stroke-width="2.6"/>
</svg>
<div class="mt" style="left:1475.5px;top:577.7px">Long Date</div>
<div class="ms" style="left:1475.5px;top:611.0px">Date</div>
<svg class="a" style="left:1396px;top:572px" width="72" height="72" viewBox="0 0 72 72">
<rect x="11.5" y="17" width="49" height="47" fill="#f7f7f7" stroke="#777" stroke-width="1.2"/>
<rect x="11.5" y="13.5" width="49" height="8" fill="#7d7d80"/>
<g stroke="#bdbdbd" stroke-width="1"><path d="M21.5 21.5 V64 M31.5 21.5 V64 M41.5 21.5 V64 M51.5 21.5 V64 M11.5 31.5 H60.5 M11.5 41.5 H60.5 M11.5 51.5 H60.5"/></g>
<circle cx="16" cy="16" r="11.5" fill="#5b8c4a" stroke="#4a7a3b" stroke-width="1"/>
<path d="M16 9.5 V22.5 M9.5 16 H22.5" stroke="#fff" stroke-width="3.6"/>
<circle cx="52" cy="52" r="13.5" fill="#fafafa" stroke="#4a7fcf" stroke-width="3.4"/>
<path d="M48.5 43 V53 H57" fill="none" stroke="#555" stroke-width="2.6"/>
</svg>
<div class="mt" style="left:1448.0px;top:654.0px">Time</div>
<div class="ms" style="left:1448.0px;top:687.9px">Date</div>
<svg class="a" style="left:1400px;top:664px" width="36" height="36" viewBox="0 0 36 36">
<circle cx="18" cy="18" r="13.5" fill="#fafafa" stroke="#4a7fcf" stroke-width="3.4"/>
<path d="M15 10 V20 H23.5" fill="none" stroke="#555" stroke-width="2.6"/></svg>
<div class="mt" style="left:1451.0px;top:727.7px">Percentage</div>
<div class="ms" style="left:1451.0px;top:762.0px">Date</div>
<div class="a" style="left:1406px;top:740.6px;font-size:30px;line-height:34px;color:#333;-webkit-text-stroke:0.3px #333">%</div>
<div class="mt" style="left:1451.0px;top:801.4px">Fraction</div>
<div class="ms" style="left:1451.0px;top:835.8px">Date</div>
<svg class="a" style="left:1402px;top:812px" width="40" height="40" viewBox="0 0 40 40"><text x="3.2" y="18.6" font-family="Liberation Sans" font-size="21" fill="#333" stroke="#333" stroke-width="0.4">1</text><path d="M10.5 33 L25.5 5" stroke="#333" stroke-width="2.4"/><text x="19.5" y="34.7" font-family="Liberation Sans" font-size="21" fill="#333" stroke="#333" stroke-width="0.4">2</text></svg>
<div class="mt" style="left:1451.0px;top:875.8px">Scientific</div>
<div class="ms" style="left:1451.0px;top:909.5px">Date</div>
<div class="a" style="left:1400px;top:893.6px;font-size:28px;line-height:30px;color:#333;letter-spacing:-2.5px;-webkit-text-stroke:0.3px #333">10</div>
<div class="a" style="left:1428.5px;top:890px;font-size:18px;line-height:18px;color:#333;-webkit-text-stroke:0.3px #333">2</div>
<div class="mt" style="left:1451.5px;top:950.0px">Text</div>
<div class="ms" style="left:1451.5px;top:983.9px">Date</div>
<div class="a" style="left:1400px;top:965.9px;font-size:22px;line-height:28px;color:#333;letter-spacing:-1.4px;-webkit-text-stroke:0.4px #333">ABC</div>
<div class="a" style="left:1400px;top:1026px;width:348px;height:2px;background:#c6c6c6"></div>
<div class="mt" style="left:1451.5px;top:1049.7px;font-size:26.5px;line-height:30px;letter-spacing:0.3px">More Number Formats...</div>
</body></html>
